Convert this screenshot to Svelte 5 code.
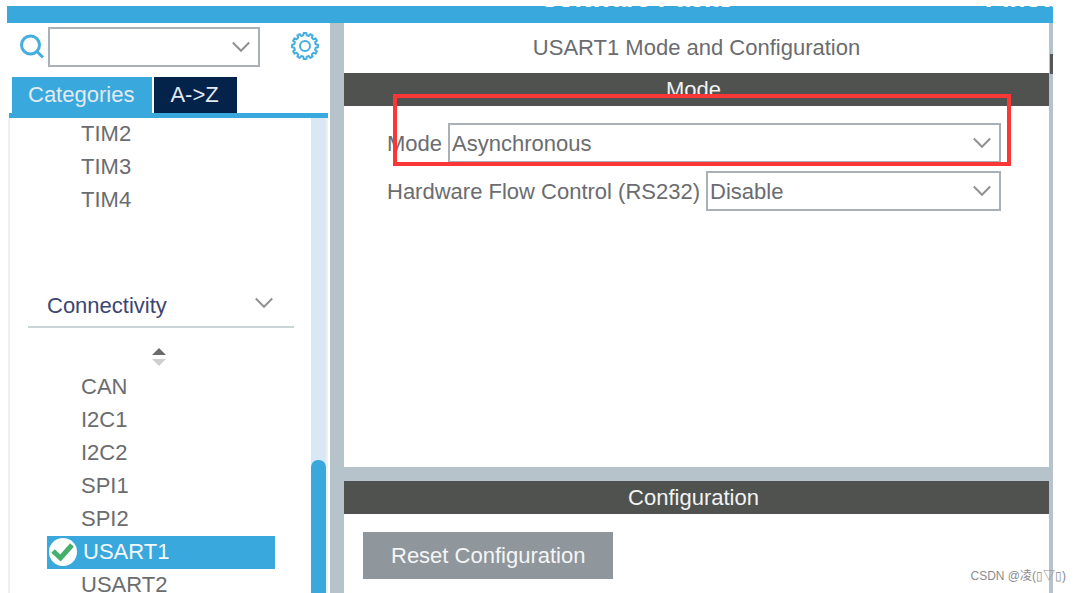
<script lang="ts">
	const timers: string[] = ['TIM2', 'TIM3', 'TIM4'];
	const connectivity: string[] = ['CAN', 'I2C1', 'I2C2', 'SPI1', 'SPI2', 'USART1', 'USART2'];
	const modes: string[] = ['Asynchronous', 'Synchronous', 'Disable'];
	const flowControls: string[] = ['Disable', 'CTS Only', 'RTS Only', 'CTS/RTS'];

	let search = '';
	let tab = 'categories';
	let selected = 'USART1';
	let mode = 'Asynchronous';
	let flowControl = 'Disable';
	let open = true;

	function gearPath(teeth: number): string {
		const step = (Math.PI * 2) / teeth;
		const points: string[] = [];
		for (let i = 0; i < teeth; i++) {
			[
				[-0.3, 10.8],
				[-0.2, 13],
				[0.2, 13],
				[0.3, 10.8]
			].forEach(([offset, radius]) => {
				const angle = (i + offset) * step;
				const x = 15 + Math.sin(angle) * radius;
				const y = 15 - Math.cos(angle) * radius;
				points.push(`${x.toFixed(2)} ${y.toFixed(2)}`);
			});
		}
		return `M${points.join('L')}Z`;
	}

	function reset() {
		mode = 'Asynchronous';
		flowControl = 'Disable';
	}
</script>

{#snippet chevron()}
	<svg class="chevron" viewBox="0 0 20 12" aria-hidden="true">
		<path d="M1.8 1.5 L10 9.8 L18.2 1.5" />
	</svg>
{/snippet}

<div class="app">
	<nav class="topbar">
		<a href="#packs">Software Packs</a>
		<a href="#pinout" class="pinout">Pinout</a>
	</nav>

	<div class="workspace">
		<aside class="sidebar">
			<div class="search">
				<svg class="magnifier" viewBox="0 0 26 26" aria-hidden="true">
					<circle cx="11.5" cy="11" r="9" />
					<path d="M18 17.5 L24 23.5" />
				</svg>
				<div class="dropdown">
					<select aria-label="Search" bind:value={search}>
						<option value=""></option>
						{#each connectivity as name}
							<option>{name}</option>
						{/each}
					</select>
					{@render chevron()}
				</div>
				<button class="settings" aria-label="Settings">
					<svg viewBox="0 0 30 30">
						<path d={gearPath(12)} />
						<circle cx="15" cy="15" r="5" />
					</svg>
				</button>
			</div>

			<div class="tabs">
				<button class:active={tab === 'categories'} onclick={() => (tab = 'categories')}>
					Categories
				</button>
				<button class:active={tab === 'az'} onclick={() => (tab = 'az')}>A-&gt;Z</button>
			</div>

			<div class="tree">
				<div class="list">
					{#each timers as name}
						<button class="item" class:selected={selected === name} onclick={() => (selected = name)}>
							{name}
						</button>
					{/each}

					<button class="group" aria-expanded={open} onclick={() => (open = !open)}>
						Connectivity
						{@render chevron()}
					</button>

					{#if open}
						<button class="sort" aria-label="Sort">
							<svg viewBox="0 0 14 20">
								<path d="M0 8 L7 1 L14 8Z" fill="#6b6b6b" />
								<path d="M0 12 L7 19 L14 12Z" fill="#cfcfcf" />
							</svg>
						</button>
						{#each connectivity as name}
							<button
								class="item"
								class:selected={selected === name}
								onclick={() => (selected = name)}
							>
								{#if selected === name}
									<svg class="check" viewBox="0 0 28 28" aria-hidden="true">
										<circle cx="14" cy="14" r="14" fill="#fff" />
										<path d="M4 13 L11.5 20 L23 7" />
									</svg>
								{/if}
								{name}
							</button>
						{/each}
					{/if}
				</div>
				<div class="track"><div class="thumb"></div></div>
			</div>
		</aside>

		<main>
			<section class="mode">
				<h1>USART1 Mode and Configuration</h1>
				<div class="modeBody">
					<h2>Mode</h2>
					<div class="form">
						<div class="field">
							<label for="mode">Mode</label>
							<div class="dropdown">
								<select id="mode" bind:value={mode}>
									{#each modes as option}
										<option>{option}</option>
									{/each}
								</select>
								{@render chevron()}
							</div>
						</div>
						<div class="field">
							<label for="flow">Hardware Flow Control (RS232)</label>
							<div class="dropdown">
								<select id="flow" bind:value={flowControl}>
									{#each flowControls as option}
										<option>{option}</option>
									{/each}
								</select>
								{@render chevron()}
							</div>
						</div>
					</div>
					<div class="highlight"></div>
				</div>
			</section>

			<section class="config">
				<h2>Configuration</h2>
				<button class="reset" onclick={reset}>Reset Configuration</button>
			</section>
		</main>

		<div class="edge"><div class="mark"></div></div>
	</div>

	<div class="watermark">CSDN @凌(▯▽▯)</div>
</div>

<style>
	:global(body) {
		background: #fff;
	}
	.app {
		box-sizing: border-box;
		position: relative;
		display: flex;
		flex-direction: column;
		height: 100vh;
		padding: 6px 28px 0 7px;
		overflow: hidden;
		font-family: 'Liberation Sans', Arial, sans-serif;
		font-size: 22px;
		line-height: 33px;
		color: #6b6c6f;
	}
	button,
	select {
		box-sizing: border-box;
		margin: 0;
		padding: 0;
		border: none;
		border-radius: 0;
		background: none;
		font: inherit;
		color: inherit;
		cursor: pointer;
	}
	h1,
	h2 {
		margin: 0;
		font-size: 22px;
		font-weight: normal;
		text-align: center;
	}
	h1 {
		line-height: 50px;
	}
	h2 {
		padding-right: 6px;
		background: #50524f;
		color: #f2f2f2;
		line-height: 33px;
	}

	.topbar {
		box-sizing: border-box;
		flex: none;
		display: flex;
		justify-content: flex-end;
		align-items: flex-end;
		gap: 252px;
		height: 17px;
		padding-bottom: 12px;
		overflow: hidden;
		background: #39a8dc;
	}
	.topbar a {
		color: #fff;
		font-size: 26px;
		font-weight: bold;
		line-height: 26px;
		text-decoration: none;
		white-space: nowrap;
	}
	.pinout {
		width: 68px;
	}

	.workspace {
		flex: 1;
		min-height: 0;
		display: flex;
		background: #b7c3ca;
	}
	.sidebar {
		box-sizing: border-box;
		flex: none;
		display: flex;
		flex-direction: column;
		width: 323px;
		margin-right: 14px;
		padding: 0 2px;
		background: #fff;
	}
	.search {
		flex: none;
		display: flex;
		align-items: center;
		height: 54px;
		padding: 0 8px 0 10px;
	}
	.search .dropdown {
		flex: 1;
		margin: 0 30px 6px 3px;
	}
	.magnifier {
		width: 26px;
		height: 26px;
		margin-bottom: 7px;
		fill: none;
		stroke: #45aede;
		stroke-width: 3;
	}
	.settings {
		width: 30px;
		height: 30px;
		margin-bottom: 9px;
	}
	.settings svg {
		display: block;
		fill: none;
		stroke: #45aede;
		stroke-width: 2;
		stroke-linejoin: round;
	}

	.dropdown {
		position: relative;
		display: flex;
	}
	select {
		appearance: none;
		width: 100%;
		height: 40px;
		padding: 0 40px 0 2px;
		border: 2px solid #a9b0b6;
		background: #fff;
	}
	.chevron {
		width: 20px;
		height: 12px;
		fill: none;
		stroke: #929292;
		stroke-width: 2;
	}
	.dropdown .chevron {
		position: absolute;
		top: 14px;
		right: 9px;
		pointer-events: none;
	}

	.tabs {
		flex: none;
		display: flex;
		gap: 2px;
		height: 36px;
		padding-left: 3px;
		border-bottom: 5px solid #39a8dc;
	}
	.tabs button {
		padding: 0 18px 2px 16px;
		background: #03234b;
		color: #e4eaf0;
	}
	.tabs .active {
		background: #39a8dc;
	}

	.tree {
		flex: 1;
		min-height: 0;
		display: flex;
		margin-left: -1px;
		border-left: 2px solid #eef0f3;
		border-right: 2px solid #f0f0f0;
	}
	.list {
		flex: 1;
		display: flex;
		flex-direction: column;
		padding: 0 17px 0 18px;
		overflow: hidden;
	}
	.item {
		flex: none;
		display: flex;
		align-items: center;
		height: 33px;
		margin: 0 19px;
		padding: 0 0 2px 34px;
	}
	.item.selected {
		gap: 6px;
		padding-left: 2px;
		background: #39a8dc;
		color: #f4f8fb;
	}
	.check {
		width: 28px;
		height: 28px;
	}
	.check path {
		fill: none;
		stroke: #45b06c;
		stroke-width: 5;
	}
	.group {
		flex: none;
		display: flex;
		justify-content: space-between;
		align-items: center;
		height: 43px;
		margin-top: 68px;
		padding: 0 20px 0 19px;
		border-bottom: 2px solid #c8d4d6;
		color: #3c4672;
	}
	.group .chevron {
		margin-bottom: 6px;
	}
	.sort {
		flex: none;
		height: 43px;
		padding: 14px 4px 0 0;
		line-height: 0;
	}
	.sort svg {
		width: 14px;
		height: 20px;
	}
	.track {
		flex: none;
		display: flex;
		align-items: flex-end;
		width: 15px;
		background: #d8e8f5;
	}
	.thumb {
		width: 100%;
		height: 28%;
		border-radius: 7px 7px 0 0;
		background: #39a8dc;
	}

	main {
		flex: 1;
		min-width: 0;
		display: flex;
		flex-direction: column;
		gap: 14px;
	}
	.mode {
		flex: 1;
		background: #fff;
	}
	.modeBody {
		position: relative;
	}
	.form {
		display: flex;
		flex-direction: column;
		gap: 8px;
		padding: 17px 48px 0 43px;
	}
	.field {
		display: flex;
		align-items: center;
		gap: 6px;
	}
	.field label {
		white-space: nowrap;
	}
	.field .dropdown {
		flex: 1;
	}
	/* red frame drawn over the mode setting */
	.highlight {
		position: absolute;
		top: 21px;
		left: 49px;
		right: 38px;
		height: 64px;
		border: 4px solid #fb3636;
		pointer-events: none;
	}
	.config {
		flex: none;
		padding-bottom: 14px;
		background: #fff;
	}
	.reset {
		display: block;
		height: 47px;
		margin: 18px 19px 0;
		padding: 0 28px;
		background: #8f979d;
		color: #f4f5f6;
	}

	.edge {
		flex: none;
		width: 4px;
		padding-top: 31px;
	}
	.mark {
		height: 20px;
		margin-left: 1px;
		background: #55575a;
	}

	.watermark {
		position: absolute;
		right: 15px;
		bottom: 8px;
		font-family: 'Liberation Sans', 'Noto Sans CJK SC', sans-serif;
		font-size: 12px;
		line-height: 18px;
		color: #8c8c8c;
	}
</style>
